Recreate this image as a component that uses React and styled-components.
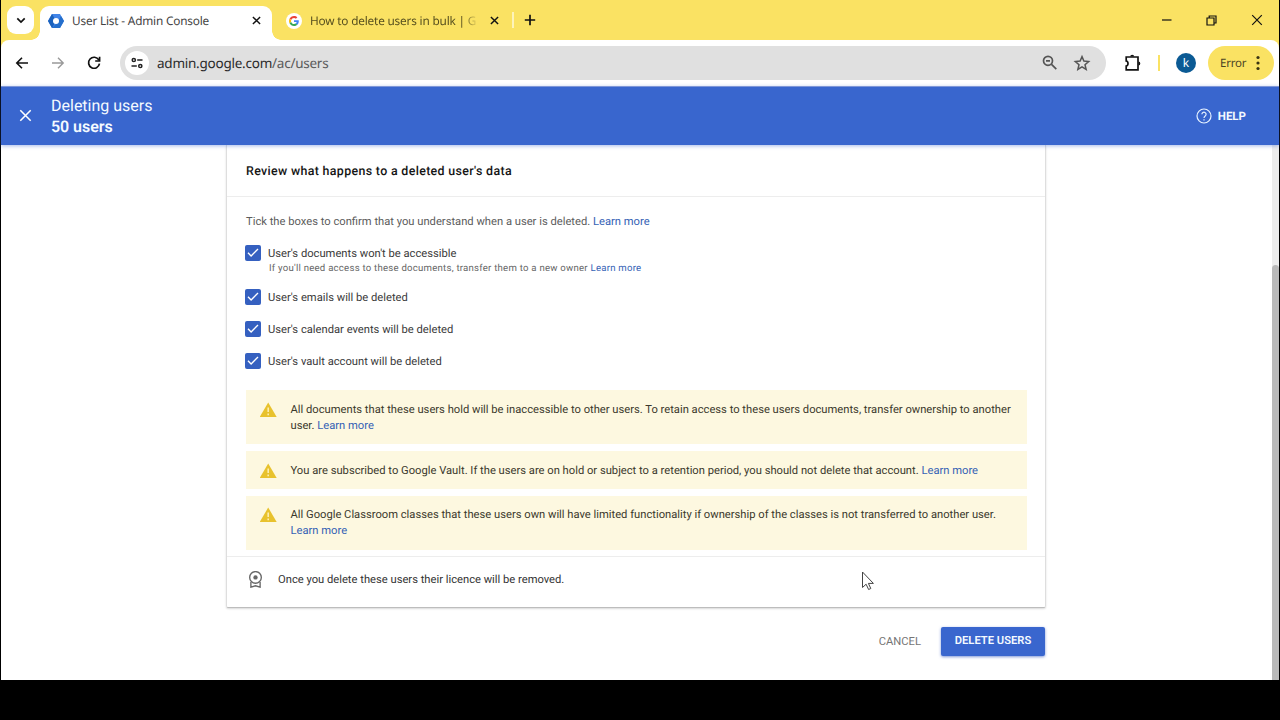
import React from 'react';
import styled, { createGlobalStyle } from 'styled-components';

const GlobalStyle = createGlobalStyle`
    * {
        box-sizing: border-box;
    }
    body {
        margin: 0;
        background: #000;
        overflow: hidden;
    }
    svg {
        display: block;
        flex-shrink: 0;
    }
`;

const Screen = styled.div`
    width: 1280px;
    height: 720px;
    padding: 0 1px 40px;
    background: #000;
    font-family: Roboto, sans-serif;
    text-rendering: geometricPrecision;
`;

const Browser = styled.div`
    display: flex;
    flex-direction: column;
    height: 680px;
    background: #fff;
`;

/* tab strip */

const TabStrip = styled.div`
    display: flex;
    height: 40px;
    padding: 6px 0 0 6px;
    background: #fae263;
    font-family: 'Noto Sans', sans-serif;
`;

const TabSearch = styled.div`
    display: flex;
    align-items: center;
    justify-content: center;
    width: 27px;
    height: 28px;
    margin-right: 6px;
    border-radius: 9px;
    background: #fff;
`;

const Tab = styled.div`
    position: relative;
    display: flex;
    align-items: center;
    width: 232px;
    height: 34px;
    padding: ${(p) => (p.$active ? '0 11px 5px 8px' : '0 5px 5px 14px')};
    border-radius: 9px 9px 0 0;
    background: ${(p) => (p.$active ? '#fff' : 'transparent')};

    &::before,
    &::after {
        content: '';
        display: ${(p) => (p.$active ? 'block' : 'none')};
        position: absolute;
        bottom: 0;
        width: 9px;
        height: 9px;
    }
    &::before {
        left: -9px;
        background: radial-gradient(circle at 0 0, transparent 8.5px, #fff 9px);
    }
    &::after {
        right: -9px;
        background: radial-gradient(circle at 100% 0, transparent 8.5px, #fff 9px);
    }
`;

const TabTitle = styled.span`
    flex: 1;
    margin-left: 8px;
    white-space: nowrap;
    font-size: 11.8px;
    line-height: 18px;
    letter-spacing: -0.18px;
    color: ${(p) => p.$color || '#444'};
    mask-image: ${(p) => (p.$fade ? 'linear-gradient(90deg, #000 153px, transparent 168px)' : 'none')};
`;

const FaviconCircle = styled.div`
    display: flex;
    align-items: center;
    justify-content: center;
    width: 16px;
    height: 16px;
    border-radius: 50%;
    background: #fff;
`;

const TabDivider = styled.div`
    width: 2px;
    height: 16px;
    margin: 6px 10px 0 8px;
    background: #fdf3bb;
`;

const NewTab = styled.div`
    padding-top: 8px;
`;

const WindowControls = styled.div`
    display: flex;
    align-items: center;
    gap: 34px;
    height: 28px;
    margin-left: auto;
    padding-right: 16px;
`;

/* toolbar */

const ToolbarBack = styled.div`
    background: #fae263;
`;

const Toolbar = styled.div`
    display: flex;
    align-items: center;
    height: 46px;
    padding: 0 4px 0 13px;
    border-radius: 8px 8px 0 0;
    background: #fff;
    font-family: 'Noto Sans', sans-serif;
`;

const NavButtons = styled.div`
    display: flex;
    gap: 20px;
`;

const Omnibox = styled.div`
    display: flex;
    align-items: center;
    width: 986px;
    height: 34px;
    margin-left: 18px;
    padding: 0 15px 0 5px;
    border-radius: 17px;
    background: #e0e0e0;
`;

const SiteInfo = styled.div`
    display: flex;
    align-items: center;
    justify-content: center;
    width: 24px;
    height: 24px;
    margin-right: 8px;
    border-radius: 50%;
    background: #fff;
`;

const Url = styled.span`
    flex: 1;
    font-size: 13.5px;
    line-height: 18px;
    letter-spacing: -0.24px;
    color: #2b2b2b;

    span {
        color: #5a5a5a;
    }
`;

const OmniboxIcons = styled.div`
    display: flex;
    gap: 14px;
`;

const Extensions = styled.div`
    margin-left: 17px;
`;

const ToolbarDivider = styled.div`
    width: 2px;
    height: 16px;
    margin: 0 16px;
    background: #fae263;
`;

const Avatar = styled.div`
    width: 20px;
    height: 20px;
    border-radius: 50%;
    background: #0b5a94;
    color: #fff;
    font-size: 12px;
    line-height: 19px;
    text-align: center;
`;

const ErrorPill = styled.div`
    display: flex;
    align-items: center;
    justify-content: space-between;
    width: 66px;
    height: 34px;
    margin-left: 12px;
    padding: 0 14px 0 12px;
    border-radius: 17px;
    background: #fae263;
    color: #4c4524;
    font-size: 11.5px;
    letter-spacing: -0.2px;
`;

/* page */

const PageHeader = styled.div`
    position: relative;
    display: flex;
    align-items: center;
    height: 59px;
    padding: 0 33px 1px 18px;
    border-top: 1px solid #7f97d8;
    background: #3966ce;
    color: #f4faff;
    box-shadow: 0 1px 4px rgba(57, 102, 206, 0.45);
`;

const HeaderText = styled.div`
    flex: 1;
    margin-left: 19px;
    font-size: 16px;
    line-height: 21px;
`;

const UserCount = styled.div`
    font-weight: 600;
    letter-spacing: -0.05px;
`;

const Help = styled.div`
    display: flex;
    align-items: center;
    gap: 6px;
    font-size: 11.5px;
    font-weight: 700;
`;

const Body = styled.div`
    display: flex;
    flex: 1;
    min-height: 0;
`;

const Content = styled.div`
    flex: 1;
    padding-left: 225px;
`;

const Scrollbar = styled.div`
    width: 7px;
    padding-top: 120px;
    background: #ececec;
`;

const Thumb = styled.div`
    height: 100%;
    border-radius: 4px 4px 0 0;
    background: #b9b9b9;
`;

const Card = styled.div`
    width: 820px;
    height: 463px;
    border: 1px solid #dedede;
    border-top: 0;
    border-bottom-color: #bdbdbd;
    border-radius: 0 0 2px 2px;
    box-shadow: 0 1px 2px rgba(0, 0, 0, 0.15);
`;

const CardTitle = styled.div`
    height: 52px;
    padding: 18px 19px 0;
    border-bottom: 1px solid #ededed;
    color: #151515;
    font-size: 12.4px;
    font-weight: 500;
    line-height: 18px;
    letter-spacing: 0.34px;
`;

const CardBody = styled.div`
    height: 360px;
    padding: 16px 18px 0;
    border-bottom: 1px solid #ededed;
    font-size: 11.2px;
    line-height: 16px;
`;

const Intro = styled.div`
    padding: 1px 0 0 1px;
    color: #5c5c5c;
`;

const Link = styled.span`
    color: #3562b5;
`;

const CheckList = styled.div`
    height: 144px;
    padding-top: 15px;
`;

const CheckRow = styled.div`
    display: flex;
    gap: 7px;
    height: ${(p) => (p.$tall ? '44px' : '32px')};
`;

const CheckBox = styled.div`
    display: flex;
    align-items: center;
    justify-content: center;
    width: 16px;
    height: 16px;
    border-radius: 2px;
    background: #3560c0;
`;

const CheckLabel = styled.div`
    padding-top: 1px;
    color: #3a3a3a;
`;

const Hint = styled.div`
    padding-left: 1px;
    color: #666;
    font-size: 9.6px;
    line-height: 14px;
    letter-spacing: 0.24px;
`;

const Alerts = styled.div`
    display: flex;
    flex-direction: column;
    gap: 7px;
    padding: 16px 0 0 1px;
`;

const Alert = styled.div`
    display: flex;
    gap: 13.5px;
    padding: ${(p) => (p.$low ? '12px 12px 10px 14px' : '11px 12px 11px 14px')};
    background: #fdf8e0;
    color: #3b382c;
    white-space: nowrap;
`;

const CardFooter = styled.div`
    display: flex;
    align-items: center;
    gap: 14px;
    height: 45px;
    padding-left: 20px;
    color: #333;
    font-size: 11.2px;
`;

const Actions = styled.div`
    display: flex;
    align-items: center;
    justify-content: flex-end;
    gap: 20px;
    width: 819px;
    padding-top: 19px;
    font-size: 11.2px;
    line-height: 28px;
`;

const CancelButton = styled.span`
    color: #757575;
`;

const DeleteButton = styled.div`
    width: 104px;
    height: 29px;
    border-radius: 2px;
    background: #3966ce;
    color: #f4faff;
    font-weight: 600;
    text-align: center;
    box-shadow: 0 1px 3px rgba(40, 80, 190, 0.6);
`;

const Pointer = styled.svg`
    position: absolute;
    left: 861px;
    top: 571px;
`;

const Icon = ({ size = 18, color = '#111', box = 24, width = 2, children }) => (
    <svg width={size} height={size} viewBox={`0 0 ${box} ${box}`} fill="none" stroke={color} strokeWidth={width}>
        {children}
    </svg>
);

const Cross = ({ size, color, width }) => (
    <Icon size={size} box={10} color={color} width={width}>
        <path d="M1 1l8 8M9 1l-8 8" />
    </Icon>
);

const Warning = () => (
    <svg width="17" height="16" viewBox="0 0 17 16">
        <path d="M8.2 .5L16.7 15H-.3z" fill="#e8c22d" />
        <path d="M8.2 5.5v4.6M8.2 11.5v1.7" stroke="#fdf0b8" strokeWidth="1.5" />
    </svg>
);

const Check = () => (
    <Icon size={16} box={16} color="#fff" width={1.4}>
        <path d="M3 7.8l3.1 3.1L13 4.1" />
    </Icon>
);

const checks = [
    { label: "User's documents won't be accessible", hint: true },
    { label: "User's emails will be deleted" },
    { label: "User's calendar events will be deleted" },
    { label: "User's vault account will be deleted" },
];

const App = () => {

    return (
        <Screen>
            <GlobalStyle />
            <Browser>
                <TabStrip>
                    <TabSearch>
                        <Icon size={10} box={10} width={1.7}>
                            <path d="M1.3 3.3L5 7l3.7-3.7" />
                        </Icon>
                    </TabSearch>
                    <Tab $active>
                        <svg width="16" height="16" viewBox="0 0 16 16">
                            <path d="M4 1h8l4 7-4 7H4L0 8z" fill="#4285e8" />
                            <path d="M4 1L0 8l4 7 2.5-4.3L5 8l1.5-2.7z" fill="#1b62bd" />
                            <path d="M4 15h8l4-7-3-5-3 5-2 3z" fill="#256fcc" />
                            <circle cx="8" cy="8" r="3" fill="#fff" />
                        </svg>
                        <TabTitle>User List - Admin Console</TabTitle>
                        <Cross size={9} width={1.6} />
                    </Tab>
                    <Tab>
                        <FaviconCircle>
                            <svg width="10" height="10" viewBox="0 0 48 48">
                                <path d="M24 9.5c3.5 0 6.7 1.2 9.2 3.6l6.9-6.9C35.9 2.4 30.5 0 24 0 14.6 0 6.5 5.4 2.6 13.2l8 6.2C12.4 13.7 17.7 9.5 24 9.5z" fill="#ea4335" />
                                <path d="M47 24.6c0-1.6-.2-3.1-.4-4.6H24v9h12.9c-.6 3-2.2 5.5-4.7 7.2l7.7 6c4.5-4.2 7.1-10.4 7.1-17.6z" fill="#4285f4" />
                                <path d="M10.5 28.6c-.5-1.5-.8-3-.8-4.6s.3-3.1.8-4.6l-8-6.2C1 16.5 0 20.1 0 24s.9 7.5 2.6 10.8z" fill="#fbbc05" />
                                <path d="M24 48c6.5 0 11.9-2.1 15.9-5.8l-7.7-6c-2.2 1.5-4.9 2.3-8.2 2.3-6.3 0-11.6-4.2-13.5-9.9l-8 6.2C6.5 42.6 14.6 48 24 48z" fill="#34a853" />
                            </svg>
                        </FaviconCircle>
                        <TabTitle $fade $color="#57501f">How to delete users in bulk | G</TabTitle>
                        <Cross size={9} width={1.6} />
                    </Tab>
                    <TabDivider />
                    <NewTab>
                        <Icon size={12} box={12} width={1.7}>
                            <path d="M6 .8v10.4M.8 6h10.4" />
                        </Icon>
                    </NewTab>
                    <WindowControls>
                        <Icon size={10} box={10} width={1.2}>
                            <path d="M0 5h9.5" />
                        </Icon>
                        <Icon size={11} box={11} width={1.2}>
                            <path d="M1 3h7v7H1zM3.2 3V1H10v7H8" />
                        </Icon>
                        <Cross size={12} width={1} />
                    </WindowControls>
                </TabStrip>

                <ToolbarBack>
                    <Toolbar>
                        <NavButtons>
                            <Icon size={16} box={16} width={1.6}>
                                <path d="M14 8H3M8 2.8L2.8 8 8 13.2" />
                            </Icon>
                            <Icon size={16} box={16} width={1.4} color="#999">
                                <path d="M2 8h11M8 2.8L13.2 8 8 13.2" />
                            </Icon>
                            <Icon size={16} box={16} width={1.7}>
                                <path d="M12.8 4.9A5.5 5.5 0 1 0 13.5 8.7M13.6 1.7v4.3H9.2" />
                            </Icon>
                        </NavButtons>
                        <Omnibox>
                            <SiteInfo>
                                <Icon size={14} box={14} width={1.5} color="#222">
                                    <circle cx="3.8" cy="4" r="1.6" />
                                    <path d="M7.2 4h5.3M1.5 10h5.3" />
                                    <circle cx="10.3" cy="10" r="1.6" />
                                </Icon>
                            </SiteInfo>
                            <Url>admin.google.com<span>/ac/users</span></Url>
                            <OmniboxIcons>
                                <Icon size={18} box={18} width={1.7} color="#555">
                                    <circle cx="7" cy="6.8" r="4.5" />
                                    <path d="M10.3 10.1l5 5M5 6.8h4" />
                                </Icon>
                                <Icon size={18} box={24} width={2} color="#555">
                                    <path d="M12 3.5l2.5 5.9 6.4.6-4.9 4.2 1.5 6.3-5.5-3.4-5.5 3.4L8 14.2 3.1 10l6.4-.6z" />
                                </Icon>
                            </OmniboxIcons>
                        </Omnibox>
                        <Extensions>
                            <Icon size={19} box={19} width={1.7}>
                                <path d="M3.2 3H15V15.8H3.2V12C5.6 11.6 5.6 7.4 3.2 7z" />
                                <path d="M7.2 2.5a2 1.8 0 0 1 4 0zM15.5 7.5a1.8 2 0 0 1 0 4z" fill="#111" stroke="none" />
                            </Icon>
                        </Extensions>
                        <ToolbarDivider />
                        <Avatar>k</Avatar>
                        <ErrorPill>
                            Error
                            <svg width="4" height="16" viewBox="0 0 4 16" fill="#3a3413">
                                <circle cx="2" cy="2.5" r="1.6" />
                                <circle cx="2" cy="8" r="1.6" />
                                <circle cx="2" cy="13.5" r="1.6" />
                            </svg>
                        </ErrorPill>
                    </Toolbar>
                </ToolbarBack>

                <PageHeader>
                    <Cross size={13} color="#fff" width={1.2} />
                    <HeaderText>
                        Deleting users
                        <UserCount>50 users</UserCount>
                    </HeaderText>
                    <Help>
                        <Icon size={16} box={16} width={1.2} color="#e8f3ff">
                            <circle cx="8" cy="8" r="7" />
                            <path d="M5.9 6.3a2.1 2.1 0 1 1 3.3 1.7C8.4 8.6 8 8.9 8 9.9M8 11.2v1.4" />
                        </Icon>
                        HELP
                    </Help>
                </PageHeader>

                <Body>
                    <Content>
                        <Card>
                            <CardTitle>Review what happens to a deleted user's data</CardTitle>
                            <CardBody>
                                <Intro>
                                    Tick the boxes to confirm that you understand when a user is deleted. <Link>Learn more</Link>
                                </Intro>
                                <CheckList>
                                    {checks.map((c) => (
                                        <CheckRow key={c.label} $tall={c.hint}>
                                            <CheckBox>
                                                <Check />
                                            </CheckBox>
                                            <div>
                                                <CheckLabel>{c.label}</CheckLabel>
                                                {c.hint && (
                                                    <Hint>
                                                        If you'll need access to these documents, transfer them to a new owner <Link>Learn more</Link>
                                                    </Hint>
                                                )}
                                            </div>
                                        </CheckRow>
                                    ))}
                                </CheckList>
                                <Alerts>
                                    <Alert $low>
                                        <Warning />
                                        <div>
                                            All documents that these users hold will be inaccessible to other users. To retain access to these users documents, transfer ownership to another<br />
                                            user. <Link>Learn more</Link>
                                        </div>
                                    </Alert>
                                    <Alert $low>
                                        <Warning />
                                        <div>
                                            You are subscribed to Google Vault. If the users are on hold or subject to a retention period, you should not delete that account. <Link>Learn more</Link>
                                        </div>
                                    </Alert>
                                    <Alert>
                                        <Warning />
                                        <div>
                                            All Google Classroom classes that these users own will have limited functionality if ownership of the classes is not transferred to another user.<br />
                                            <Link>Learn more</Link>
                                        </div>
                                    </Alert>
                                </Alerts>
                            </CardBody>
                            <CardFooter>
                                <Icon size={17} box={14} width={1.1} color="#666">
                                    <circle cx="7" cy="5.3" r="4.8" />
                                    <circle cx="7" cy="5.3" r="1.8" fill="#666" stroke="none" />
                                    <path d="M3.2 9v4.3l3.8-1.1 3.8 1.1V9" />
                                </Icon>
                                Once you delete these users their licence will be removed.
                            </CardFooter>
                        </Card>
                        <Actions>
                            <CancelButton>CANCEL</CancelButton>
                            <DeleteButton>DELETE USERS</DeleteButton>
                        </Actions>
                    </Content>
                    <Scrollbar>
                        <Thumb />
                    </Scrollbar>
                </Body>
            </Browser>
            <Pointer width="14" height="20" viewBox="0 0 14 20">
                <path d="M1.5 1v15.5l3.6-3.3 2.5 5.3 2.2-1-2.4-5.1h5z" fill="#fff" stroke="#444" strokeWidth="1" />
            </Pointer>
        </Screen>
)};

export default App;
